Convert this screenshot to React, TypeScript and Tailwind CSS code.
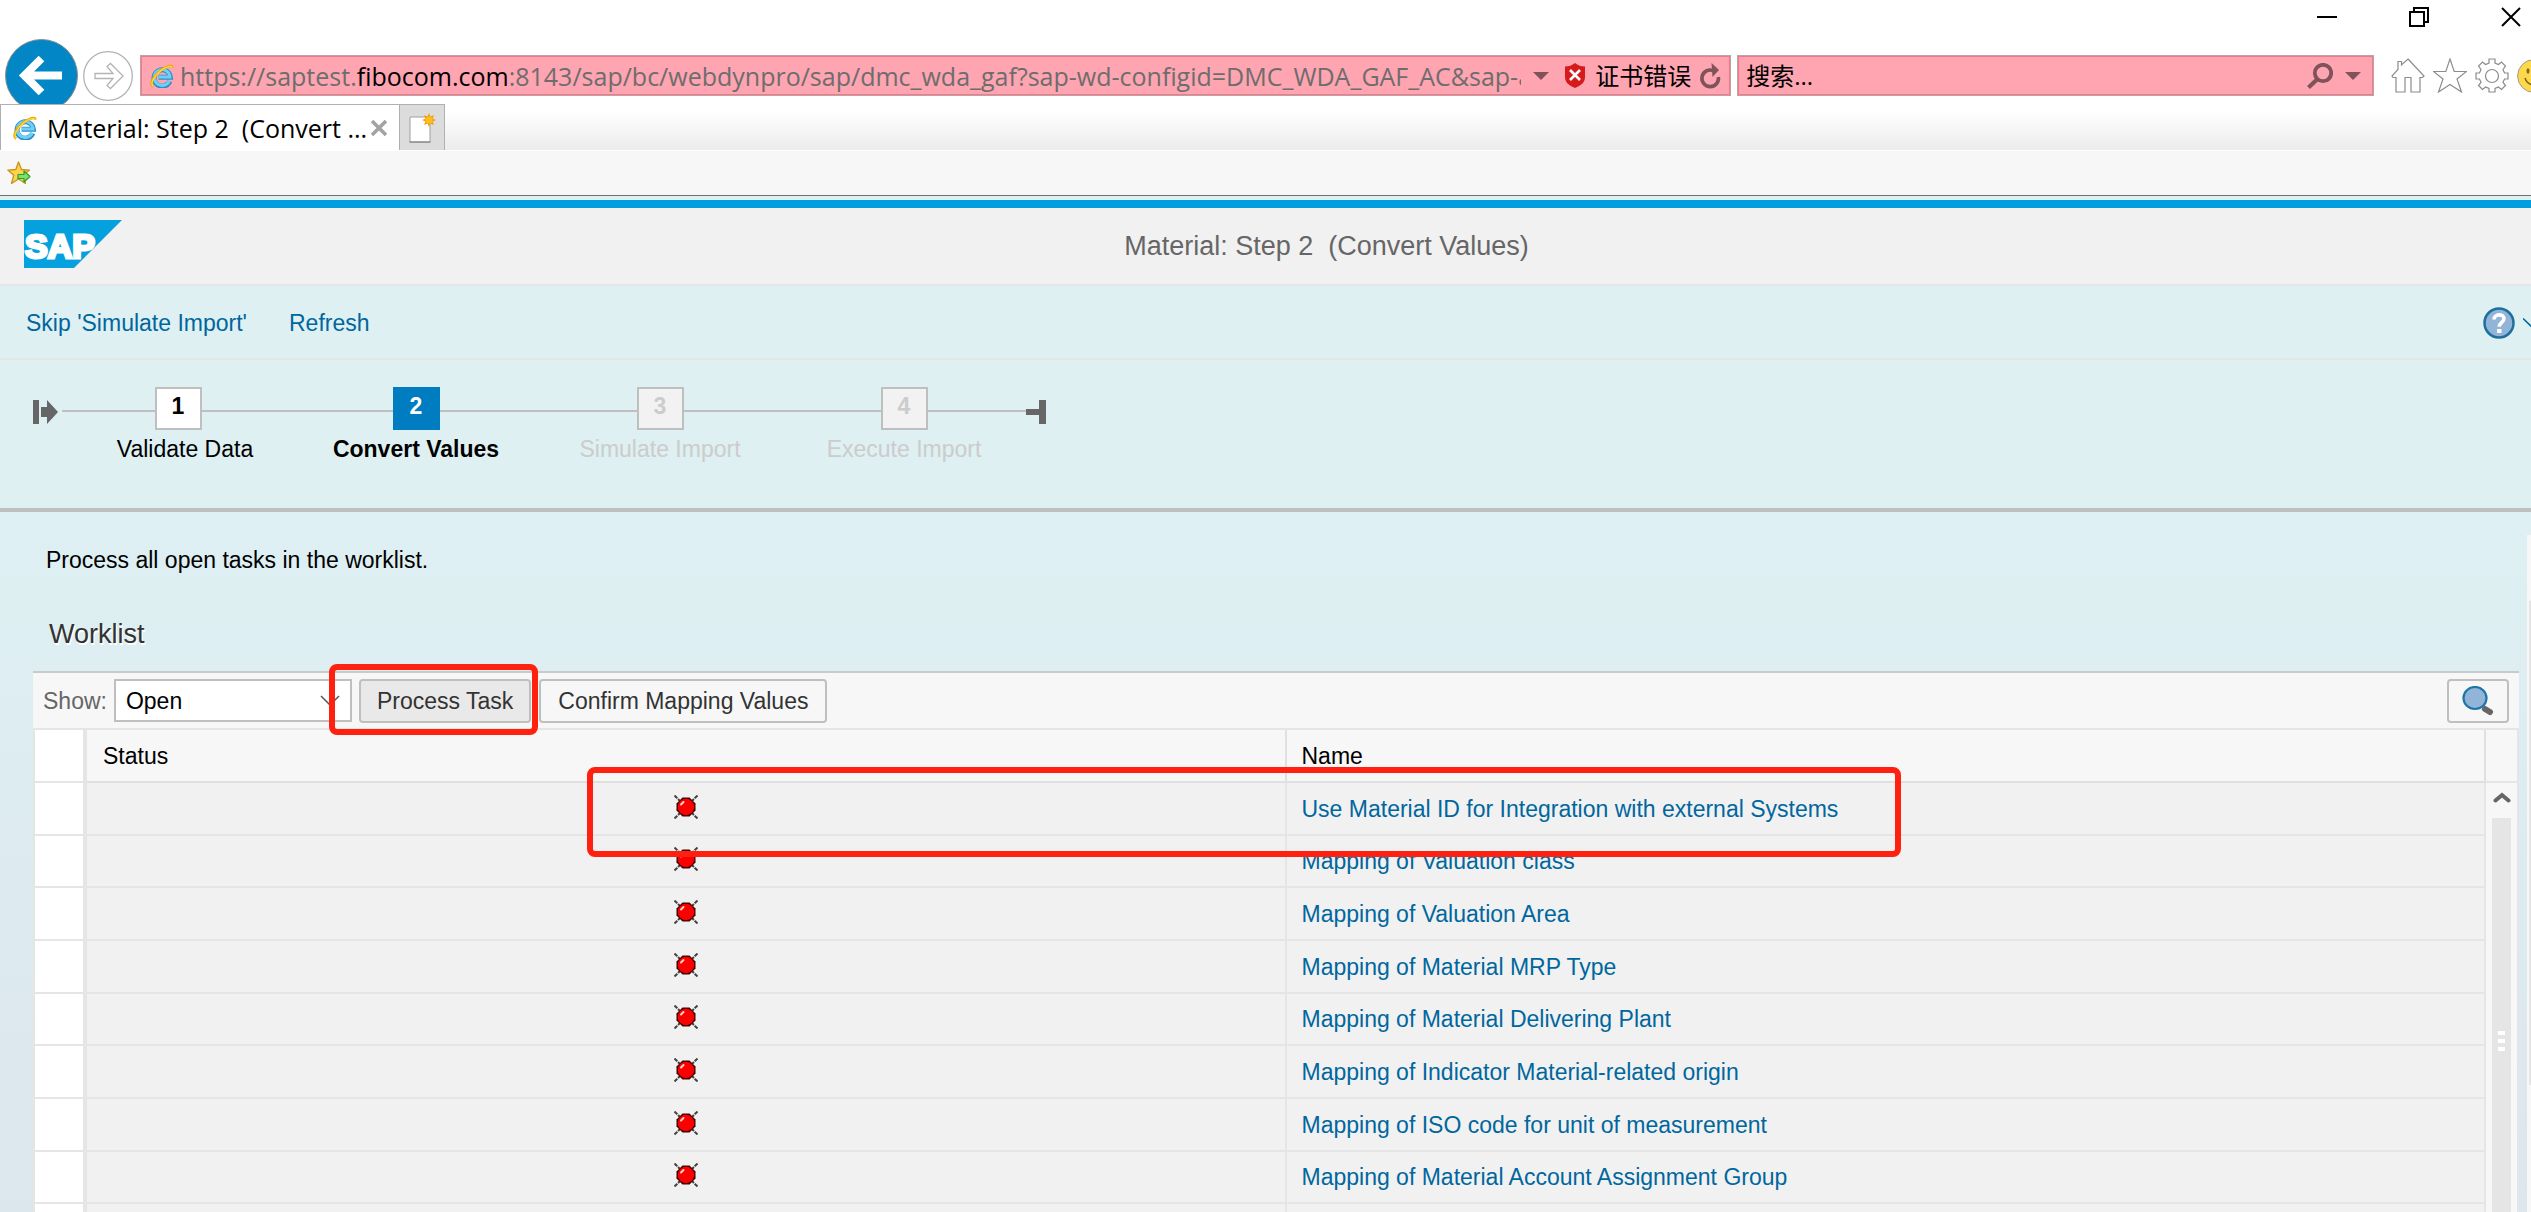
import { useState } from 'react'

const STEPS = [
  { num: 1, label: 'Validate Data', state: 'done' },
  { num: 2, label: 'Convert Values', state: 'current' },
  { num: 3, label: 'Simulate Import', state: 'disabled' },
  { num: 4, label: 'Execute Import', state: 'disabled' },
] as const

const TASKS = [
  'Use Material ID for Integration with external Systems',
  'Mapping of Valuation class',
  'Mapping of Valuation Area',
  'Mapping of Material MRP Type',
  'Mapping of Material Delivering Plant',
  'Mapping of Indicator Material-related origin',
  'Mapping of ISO code for unit of measurement',
  'Mapping of Material Account Assignment Group',
]

function BrowserIcon() {
  return (
    <svg width="24" height="24" viewBox="0 0 24 24" fill="none" className="shrink-0">
      <path d="M19.8 17.2A8.2 8.2 0 1 1 20.4 13.2H8.6" stroke="#2b8fc9" strokeWidth="5" />
      <path d="M19.3 16.8A7.9 7.9 0 1 1 20 13H8.6" stroke="#6fd0f6" strokeWidth="3" />
      <path d="M3.2 22.6C-.6 20.4 3 12.6 9.6 7.2 15 2.6 21.6.2 22.6 3.6" stroke="#e8a800" strokeWidth="2.6" />
      <path d="M3.2 22.2C0 19.8 3.6 12.8 9.8 7.6 15 3.2 21 1 22.2 3.4" stroke="#ffd53a" strokeWidth="1.4" />
    </svg>
  )
}

function Triangle() {
  return (
    <svg width="16" height="8" viewBox="0 0 16 8" fill="#80525a">
      <path d="M0 0h16L8 8z" />
    </svg>
  )
}

function StatusLed() {
  return (
    <svg width="24" height="24" viewBox="0 0 24 24" className="mx-auto mb-1 block" role="img" aria-label="Open">
      <path d="M.5.5L6 6M23.5.5L18 6M.5 23.500L6 18M23.500 23.500L18 18" stroke="#444" strokeWidth="2" strokeDasharray="4 1" />
      <path d="M8.500 2.500h7l6 6v7l-6 6h-7l-6-6v-7z" fill="#400000" />
      <circle cx="12" cy="12" r="8.300" fill="#fb0000" />
      <path d="M7 9.500L9.500 7" stroke="#ffd0d0" strokeWidth="2" strokeLinecap="round" />
    </svg>
  )
}

function TitleBar() {
  return (
    <div className="flex h-[37px] items-start justify-end gap-[72px] pr-[10px] pt-[7px]">
      <button aria-label="Minimize">
        <svg width="20" height="20" viewBox="0 0 20 20"><path d="M0 10h20" stroke="#000" strokeWidth="2" /></svg>
      </button>
      <button aria-label="Restore">
        <svg width="20" height="20" viewBox="0 0 20 20" fill="none" stroke="#000" strokeWidth="2">
          <path d="M1 5h14v14H1zM5 5V1h14v14h-4" />
        </svg>
      </button>
      <button aria-label="Close">
        <svg width="20" height="20" viewBox="0 0 20 20" stroke="#000" strokeWidth="2"><path d="M1 1l18 18M19 1L1 19" /></svg>
      </button>
    </div>
  )
}

function NavBar() {
  return (
    <div className="flex h-[77px] items-center pl-[5px] text-2xl">
      <button aria-label="Back" className="shrink-0">
        <svg width="73" height="73" viewBox="0 0 73 73">
          <circle cx="36.5" cy="36.5" r="36" fill="#0286c6" stroke="#8a8a8a" />
          <path d="M57 36.5H22M36.5 19.5l-17 17 17 17" fill="none" stroke="#fff" strokeWidth="8" />
        </svg>
      </button>
      <button aria-label="Forward" className="ml-[5px] shrink-0">
        <svg width="50" height="50" viewBox="0 0 50 50" fill="none" stroke="#b4b4b4">
          <circle cx="25" cy="25" r="24.3" fill="#fff" strokeWidth="1.3" />
          <path d="M12 22.5h18l-6-7 3.5-3L40 25 27.500 37.500l-3.500-3 6-7H12z" strokeWidth="1.3" />
        </svg>
      </button>
      <div className="ml-[7px] flex h-[41px] min-w-0 flex-[23_1_0%] items-center border border-[#b0a8a9] bg-[#ffa4b1] px-[9px] shadow-[inset_0_0_0_1px_#ff7386]">
        <BrowserIcon />
        <div
          role="textbox"
          aria-label="Address"
          className="ml-[6px] min-w-0 flex-1 overflow-hidden whitespace-nowrap text-[25px] leading-8 text-[#6d6d6d]"
        >
          https://saptest.<span className="text-black">fibocom.com</span>
          :8143/sap/bc/webdynpro/sap/dmc_wda_gaf?sap-wd-configid=DMC_WDA_GAF_AC&amp;sap-a
        </div>
        <button aria-label="Show address list" className="ml-3 shrink-0"><Triangle /></button>
        <button className="ml-4 flex shrink-0 items-center gap-[10px] leading-8">
          <svg width="20" height="25" viewBox="0 0 20 25">
            <path d="M10 0c3 2.500 6 3.500 10 3.500V14c0 5.500-4 8.500-10 11C4 22.500 0 19.500 0 14V3.500C4 3.500 7 2.500 10 0z" fill="#d61a1c" />
            <path d="M5 7l10 10M15 7L5 17" stroke="#fff" strokeWidth="2.600" />
          </svg>
          证书错误
        </button>
        <button aria-label="Refresh page" className="ml-2 shrink-0">
          <svg width="22" height="26" viewBox="0 0 22 26" fill="none">
            <path d="M14 7.500A8.300 8.300 0 1 0 19.400 14" stroke="#80525a" strokeWidth="3.600" />
            <path d="M12.500 0l7.500 7-6.500 7z" fill="#80525a" />
          </svg>
        </button>
      </div>
      <div className="ml-[6px] flex h-[41px] min-w-0 flex-[9_1_0%] items-center border border-[#b0a8a9] bg-[#ffa4b1] pl-2 pr-3 shadow-[inset_0_0_0_1px_#ff7386]">
        <input
          aria-label="Search the web"
          placeholder="搜索..."
          className="min-w-0 flex-1 bg-transparent leading-8 outline-none placeholder:text-black"
        />
        <button aria-label="Search">
          <svg width="26" height="26" viewBox="0 0 26 26" fill="none" stroke="#80525a">
            <circle cx="16" cy="10" r="8.200" strokeWidth="3.800" />
            <path d="M10.500 16L1.500 24.500" strokeWidth="4.200" />
          </svg>
        </button>
        <button aria-label="Search options" className="ml-3"><Triangle /></button>
      </div>
      <div className="ml-[17px] flex shrink-0 items-center gap-2">
        <button aria-label="Home">
          <svg width="34" height="35" viewBox="0 0 34 35" fill="none" stroke="#8c8c8c" strokeWidth="1.200">
            <path d="M17 1L33 18l-1.500 1.500H29V34H20V19.500H14V34H5V19.500H2L1 18l6-6.500V3.500h3.500V7z" />
          </svg>
        </button>
        <button aria-label="Favorites">
          <svg width="34" height="35" viewBox="0 0 34 35" fill="none" stroke="#8c8c8c" strokeWidth="1.200">
            <path d="M17 1l4.200 12.500H33.500L24 21l4.500 13L17 26.500 5.500 34 10 21 .5 13.500h12.300z" />
          </svg>
        </button>
        <button aria-label="Tools">
          <svg width="34" height="35" viewBox="0 0 34 35" fill="none" stroke="#8c8c8c" strokeWidth="1.200">
            <path d="M14 1h6v4l3.500 1.500L26.500 4l4 4-2.500 3.500L29.500 15H33v6h-3.500L28 24.500l2.500 3-4 4-3-2.500L20 30.500V34h-6v-3.500L10.500 29l-3 2.500-4-4 2.500-3L4.500 21H1v-6h3.500L6 11.500 3.500 8l4-4 3 2.500L14 5z" />
            <circle cx="17" cy="18" r="6.500" />
          </svg>
        </button>
        <button aria-label="Feedback" className="w-[14px] overflow-hidden">
          <svg width="34" height="34" viewBox="0 0 34 34" className="max-w-none">
            <circle cx="17" cy="17" r="16.400" fill="#ffd84a" stroke="#999" />
            <ellipse cx="11" cy="12" rx="1.500" ry="2.800" fill="#80672a" />
            <ellipse cx="23" cy="12" rx="1.500" ry="2.800" fill="#80672a" />
            <path d="M8 19c3 9 15 9 18 0" fill="none" stroke="#80672a" strokeWidth="1.600" />
          </svg>
        </button>
      </div>
    </div>
  )
}

function TabStrip() {
  return (
    <div className="relative -mt-[10px] flex h-[47px] border-b border-white bg-linear-to-b from-white from-15% to-[#ececec]">
      <div className="flex w-[399px] items-center border-l border-t border-[#b0b0b0] bg-white px-3 text-[25px]">
        <BrowserIcon />
        <span className="ml-[10px] flex-1 whitespace-pre leading-8">Material: Step 2  (Convert ...</span>
        <button aria-label="Close tab">
          <svg width="16" height="16" viewBox="0 0 16 16" stroke="#a3a3a3" strokeWidth="3.600"><path d="M1 1l14 14M15 1L1 15" /></svg>
        </button>
      </div>
      <button aria-label="New tab" className="flex w-[46px] items-center justify-center border-x border-t border-[#b0b0b0] bg-[#dcdcdc]">
        <svg width="28" height="30" viewBox="0 0 28 30">
          <path d="M2 4h20v25H2z" fill="#fff" stroke="#a0a0a0" />
          <path d="M1.500 29h21" stroke="#777" />
          <path d="M21 0l1.300 3.600L26 2.200l-1.400 3.600L28 7l-3.400 1.400L26 12l-3.700-1.400L21 14l-1.400-3.400L16 12l1.400-3.600L14 7l3.400-1.200L16 2.200l3.600 1.400z" fill="#f59a0a" />
          <circle cx="21" cy="7" r="3.600" fill="#ffc01e" />
        </svg>
      </button>
    </div>
  )
}

function FavoritesBar() {
  return (
    <div className="flex h-[45px] items-center border-b border-[#6f6f6f] bg-[#f7f7f7] pl-[7px]">
      <button aria-label="Add to favorites bar">
        <svg width="24" height="24" viewBox="0 0 24 24" strokeLinejoin="round">
          <path d="M11.500 1l3 7.500 8 .6-6.200 5.200 2.200 8.200-7-4.500-7 4.500 2.200-8.200L.8 9.100l8-.6z" fill="#fcd34d" stroke="#c8921e" strokeWidth="1.300" />
          <path d="M11 13.500h6V10l6 5.500-6 5.500v-3.500h-6z" fill="#7ee26a" stroke="#2c9e2c" strokeWidth="1.200" />
        </svg>
      </button>
    </div>
  )
}

function AppHeader() {
  return (
    <header className="mt-1 flex h-[86px] items-center border-b-2 border-t-8 border-b-[#e5e5e5] border-t-[#009de0] bg-[#f1f1f1] pb-1 pl-6">
      <svg width="98" height="48" viewBox="0 0 98 48" role="img" aria-label="SAP">
        <path d="M0 0h98L50 48H0z" fill="#05a0de" />
        <text x="1" y="38" fontFamily="Liberation Sans, Arial, sans-serif" fontWeight="bold" fontSize="34" fill="#fff" stroke="#fff" strokeWidth="3">SAP</text>
      </svg>
      <h1 className="mt-1 flex-1 whitespace-pre text-center text-[27px] leading-8 text-[#666]">
        Material: Step 2  (Convert Values)
      </h1>
    </header>
  )
}

function ActionBar() {
  return (
    <nav className="flex h-[74px] items-center border-b-2 border-[#e5e5e5] pl-[26px] pt-[2px] text-[#00679e]">
      <a href="#skip">Skip 'Simulate Import'</a>
      <a href="#refresh" className="ml-[42px]">Refresh</a>
      <button aria-label="Help" className="ml-auto">
        <svg width="32" height="32" viewBox="0 0 32 32">
          <circle cx="16" cy="16" r="14.500" fill="#92b4d8" stroke="#1d6f9e" strokeWidth="2.500" />
          <path d="M11 12.500c0-6 10-6 10-.8 0 3.600-4.800 3.800-4.800 8" fill="none" stroke="#fff" strokeWidth="3.600" />
          <path d="M14 22h4.500v4H14z" fill="#fff" />
        </svg>
      </button>
      <button aria-label="Help menu" className="ml-2 w-2 overflow-hidden">
        <svg width="18" height="10" viewBox="0 0 18 10" fill="none" stroke="#00679e" strokeWidth="1.600" className="max-w-none"><path d="M0 .5l9 8.500 9-8.500" /></svg>
      </button>
    </nav>
  )
}

function Roadmap() {
  return (
    <div className="flex h-[152px] border-b-4 border-[#bfbfbf] pl-[33px] pt-[27px]">
      <svg width="25" height="24" viewBox="0 0 25 24" fill="#666" className="mr-1 mt-[13px]">
        <path d="M0 0h6v24H0zM8 7h6V0l11 12-11 12v-7H8z" />
      </svg>
      <ol className="flex">
        {STEPS.map(step => (
          <li key={step.num} className="w-[244px] text-center first:w-[232px]">
            <div className="flex items-center">
              <span className="mt-1 h-[2px] flex-1 bg-[#bfbfbf]" />
              <span
                className={`h-[43px] w-[47px] border-2 pt-[3px] font-bold leading-7 ${
                  step.state === 'current'
                    ? 'border-[#007cc0] bg-[#007cc0] text-white'
                    : step.state === 'done'
                      ? 'border-[#bfbfbf] bg-white text-black'
                      : 'border-[#bfbfbf] bg-[#f2f2f2] text-[#ccc]'
                }`}
              >
                {step.num}
              </span>
              <span className="mt-1 h-[2px] flex-1 bg-[#bfbfbf]" />
            </div>
            <div
              className={`mt-[5px] ${
                step.state === 'current' ? 'font-bold' : step.state === 'disabled' ? 'text-[#ccc]' : 'pl-[14px]'
              }`}
            >
              {step.label}
            </div>
          </li>
        ))}
      </ol>
      <svg width="20" height="24" viewBox="0 0 20 24" fill="#666" className="mt-[13px]">
        <path d="M0 9h13V0h7v24h-7v-9H0z" />
      </svg>
    </div>
  )
}

function Toolbar() {
  const [show, setShow] = useState('open')

  return (
    <div className="relative z-10 flex h-[59px] shrink-0 items-center border-b-2 border-t-2 border-b-[#e5e5e5] border-t-[#c8cacb] bg-[#f7f7f7] px-[10px]">
      <label htmlFor="show" className="text-[#666]">Show:</label>
      <div className="relative ml-[7px]">
        <select
          id="show"
          value={show}
          onChange={e => setShow(e.target.value)}
          className="block h-[43px] w-[238px] appearance-none border-2 border-[#bfbfbf] bg-white pl-[10px]"
        >
          <option value="open">Open</option>
          <option value="all">All</option>
        </select>
        <svg width="20" height="11" viewBox="0 0 20 11" fill="none" stroke="#555" strokeWidth="1.500" className="pointer-events-none absolute right-3 top-4">
          <path d="M1 1l9 9 9-9" />
        </svg>
      </div>
      <div className="relative ml-[7px]">
        <button className="block h-11 rounded border-2 border-[#bfbfbf] bg-[#e9e9e9] px-4 text-[#333]">Process Task</button>
        <div className="pointer-events-none absolute -bottom-3 -left-[30px] -right-[7px] -top-[15px] rounded-lg border-6 border-[#ff2010]" />
      </div>
      <button className="ml-2 h-11 rounded border-2 border-[#bfbfbf] px-[17px] text-[#333]">Confirm Mapping Values</button>
      <button aria-label="Search worklist" className="ml-auto flex h-11 w-[62px] items-center justify-center rounded border-2 border-[#bfbfbf]">
        <svg width="32" height="30" viewBox="0 0 32 30">
          <path d="M23 23l5 3" stroke="#666" strokeWidth="6" strokeLinecap="round" />
          <ellipse cx="13" cy="12" rx="11.500" ry="11" fill="#92b4d8" stroke="#1d76a8" strokeWidth="2.200" />
        </svg>
      </button>
    </div>
  )
}

function Worklist() {
  return (
    <section className="ml-[33px] mr-3 flex min-h-0 flex-1 flex-col">
      <Toolbar />
      <div className="relative flex min-h-0 flex-1">
        <table className="w-full min-w-0 flex-1 table-fixed border-separate border-spacing-0 self-start bg-[#f1f1f1] text-left">
          <colgroup>
            <col className="w-[54px]" />
            <col />
            <col />
          </colgroup>
          <thead>
            <tr className="h-[53px] bg-[#f7f7f7]">
              <td className="border-b-2 border-l-2 border-r-4 border-[#e5e5e5] bg-white" />
              <th className="border-b-2 border-r-2 border-[#e0e0e0] px-4 font-normal">Status</th>
              <th className="border-b-2 border-r-2 border-[#e0e0e0] px-[15px] font-normal">Name</th>
            </tr>
          </thead>
          <tbody>
            {TASKS.map(task => (
              <tr key={task} className="h-[53px] nth-[3n+2]:h-[52px]">
                <td className="border-b-2 border-l-2 border-r-4 border-[#e5e5e5] bg-white" />
                <td className="border-b-2 border-r-2 border-[#e5e5e5]"><StatusLed /></td>
                <td className="border-b-2 border-r-2 border-[#e5e5e5] px-[15px] text-[#00679e]">
                  <a href="#task">{task}</a>
                </td>
              </tr>
            ))}
            <tr className="h-[53px]">
              <td className="border-l-2 border-r-4 border-[#e5e5e5] bg-white" />
              <td className="border-r-2 border-[#e5e5e5]" />
              <td className="border-r-2 border-[#e5e5e5]" />
            </tr>
          </tbody>
        </table>
        <div className="flex w-[33px] flex-col border-r-2 border-[#e5e5e5] bg-[#f7f7f7]">
          <div className="h-[53px] shrink-0 border-b-2 border-[#e5e5e5]" />
          <button aria-label="Scroll up" className="flex h-[35px] shrink-0 items-start justify-center pt-[9px]">
            <svg width="18" height="11" viewBox="0 0 18 11" fill="none" stroke="#666" strokeWidth="4" strokeLinecap="round">
              <path d="M2.500 8.500L9 3l6.500 5.500" />
            </svg>
          </button>
          <div className="mx-[6px] flex flex-1 flex-col items-center gap-1 bg-[#e5e5e5] pt-[213px]">
            <span className="h-1 w-[7px] bg-white" />
            <span className="h-1 w-[7px] bg-white" />
            <span className="h-1 w-[7px] bg-white" />
          </div>
        </div>
        <div className="pointer-events-none absolute left-[554px] top-[37px] h-[90px] w-[1314px] rounded-lg border-6 border-[#ff2010]" />
      </div>
    </section>
  )
}

export default function App() {
  return (
    <div className="flex h-screen flex-col overflow-hidden bg-[#def0f2] font-['Liberation_Sans',Arial,sans-serif] text-[23px] leading-7 text-black">
      <div className="shrink-0 bg-white font-['Open_Sans','Noto_Sans_CJK_SC',sans-serif]">
        <TitleBar />
        <NavBar />
        <TabStrip />
        <FavoritesBar />
      </div>
      <div className="shrink-0">
        <AppHeader />
        <ActionBar />
        <Roadmap />
      </div>
      <main className="relative flex min-h-0 flex-1 flex-col bg-linear-to-b from-[#def0f3] to-[#dce6ed]">
        <p className="ml-[46px] mt-[34px]">Process all open tasks in the worklist.</p>
        <h2 className="mb-[21px] ml-[49px] mt-11 text-[27px] leading-8 text-[#333] [text-shadow:1px_2px_0_#fff]">Worklist</h2>
        <Worklist />
        <div className="absolute bottom-0 right-0 top-[23px] w-1 bg-[#f7f7f7] pl-[2px] pt-[66px]">
          <div className="h-[484px] bg-[#e5e5e5]" />
        </div>
      </main>
    </div>
  )
}
